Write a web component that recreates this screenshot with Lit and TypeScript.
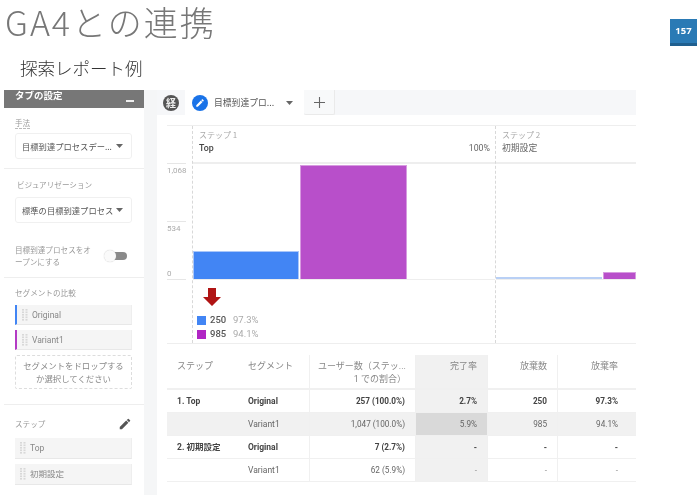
import { LitElement, html, css, svg } from "lit";
import { customElement } from "lit/decorators.js";

const grip = html`<svg class="grip" width="6" height="12" viewBox="0 0 6 12">${[0, 2.5, 5, 7.5, 10].map(
  (y) => svg`<rect x="0" y="${y}" width="2" height="1.6" fill="#d8d8d8"/><rect x="3.5" y="${y}" width="2" height="1.6" fill="#d8d8d8"/>`
)}</svg>`;
const caret = html`<svg class="caret" width="7" height="4" viewBox="0 0 7 4"><path d="M0 0h7L3.5 4z" fill="#666"/></svg>`;

@customElement("app-root")
export class AppRoot extends LitElement {
  static styles = css`
    :host { display: block; width: 700px; height: 495px; overflow: hidden; background: #fff;
      font-family: Roboto, "Noto Sans CJK JP", sans-serif; color: #555; }
    .page { width: 700px; height: 495px; overflow: hidden; display: flex; flex-direction: column; filter: blur(0.45px); }
    .head { height: 90px; flex: none; display: flex; justify-content: space-between; }
    .titles { padding: 0 0 0 5px; }
    h1 { margin: 0; height: 50px; font: 300 34px/44px "Noto Sans CJK JP", sans-serif; letter-spacing: 2px; color: #777; }
    h2 { margin: 0 0 0 15px; font: 300 17.5px/36px "Noto Sans CJK JP", sans-serif; color: #333; }
    .pageno { margin: 19px 3px 0 0; width: 27px; height: 27px; box-sizing: border-box; background: #2a7ab5; border-bottom: 3px solid #1f5f8f;
      color: #fff; font: 700 9.5px/24px "Open Sans", sans-serif; text-align: center; }
    .body { display: flex; flex: 1; min-height: 0; }
    .side { width: 140px; margin-left: 4px; flex: none; }
    .gutter { width: 13px; flex: none; background: #f5f6f7; }
    .sidehead { height: 18px; background: #777; color: #fff; font: 700 9.5px/11px "Noto Sans CJK JP", sans-serif; padding: 0 10px 0 11px; display: flex; justify-content: space-between; }
    .sidehead i { width: 8px; height: 1.5px; background: #eee; margin: 10px 0 0; }
    .sec { padding: 0 12px 0 11px; border-bottom: 1px solid #eee; box-sizing: border-box; }
    .lab { font: 7.6px/12px "Noto Sans CJK JP", sans-serif; color: #999; }
    .dashed { display: inline-block; border-bottom: 1px dashed #bbb; line-height: 10px; }
    .sel { height: 26px; box-sizing: border-box; border: 1px solid #f0f0f0; border-radius: 3px; display: flex; align-items: center; justify-content: space-between;
      padding: 0 8px 0 6px; font: 8.3px/12px "Noto Sans CJK JP", sans-serif; color: #555; white-space: nowrap; }
    .s1 { height: 61px; padding-top: 9px; }
    .s1 .sel { margin-top: 4px; }
    .s2 { height: 108px; padding-top: 10px; border-bottom: 0; }
    .s2 .lab.v { padding-left: 2px; }
    .s2 .sel { margin-top: 6px; }
    .tog { display: flex; justify-content: space-between; align-items: center; height: 27px; margin-top: 19px; padding-right: 5px; }
    .tog .lab { width: 80px; line-height: 12px; }
    .sw { width: 23px; height: 12px; position: relative; flex: none; }
    .sw::before { content: ""; position: absolute; left: 6px; top: 2px; width: 17px; height: 8.5px; border-radius: 5px; background: #8a8a8a; }
    .sw::after { content: ""; position: absolute; left: 0; top: 0; width: 12px; height: 12px; border-radius: 50%; background: #fafafa; box-shadow: 0 0 1px #bbb; }
    .s3 { height: 128px; padding-top: 9px; border-top: 1px solid #eee; }
    .s3 > .lab, .s4 > .lab { line-height: 12px; }
    .chip { height: 20px; box-sizing: border-box; background: #f5f5f5; border-bottom: 1px solid #e8e8e8; border-right: 1px solid #eee; display: flex; align-items: center; gap: 4px;
      font: 8.5px/12px Roboto, "Noto Sans CJK JP", sans-serif; color: #888; padding-left: 5px; }
    .chip.b { border-left: 2px solid #4285f4; margin-top: 6px; }
    .chip.p { border-left: 2px solid #b33ac4; margin-top: 5px; }
    .drop { margin-top: 5px; height: 34px; box-sizing: border-box; border: 1px dashed #ddd; border-radius: 2px; text-align: center;
      font: 8.4px/12.5px "Noto Sans CJK JP", sans-serif; color: #888; padding-top: 3px; }
    .s4 { border: 0; padding-top: 12px; }
    .s4 .row { display: flex; justify-content: space-between; align-items: center; height: 14px; }
    .s4 .chip { margin-top: 5px; padding-left: 5px; height: 21px; }
    .s4 .row + .chip { margin-top: 7px; }
    .main { width: 479px; flex: none; }
    .tabs { height: 25px; background: #f6f7f9; display: flex; }
    .tabs .ava { width: 28px; flex: none; display: flex; align-items: center; justify-content: center; }
    .ava span { width: 16px; height: 16px; border-radius: 50%; background: #555; color: #eee; font: 700 10px/16px "Noto Sans CJK JP", sans-serif; text-align: center; }
    .tab { width: 119px; background: #fff; display: flex; align-items: center; padding-left: 7px; box-sizing: border-box; font: 8.8px/12px "Noto Sans CJK JP", sans-serif; color: #555; }
    .pen { width: 16px; height: 16px; border-radius: 50%; background: #1a73e8; display: flex; align-items: center; justify-content: center; margin-right: 6px; }
    .tab .caret { margin-left: 12px; }
    .plus { width: 31px; box-sizing: border-box; border-right: 1px solid #eaeaea; border-bottom: 1px solid #eaeaea; border-radius: 0 0 2px 2px; display: flex; align-items: center; justify-content: center; background: #f8f9fa; }
    .chart { margin: 10px 0 0 10px; display: grid; grid-template-columns: 25px 303px 141px; border-top: 1px solid #eee; height: 219px; box-sizing: border-box; border-bottom: 1.5px solid #eee; }
    .axis { padding-top: 37px; font: 8px/10px Roboto, sans-serif; color: #aaa; }
    .seg { height: 58px; width: 19px; border-top: 1px solid #e6e6e6; box-sizing: border-box; display: flex; flex-direction: column; justify-content: space-between; padding-top: 2px; }
    .seg + .seg { border-bottom: 1px solid #e6e6e6; height: 59px; }
    .col { border-left: 1px dashed #d8d8d8; box-sizing: border-box; display: flex; flex-direction: column; }
    .colhead { height: 38px; border-bottom: 2px solid #eee; box-sizing: border-box; padding: 3px 5px 0 6px; flex: none; }
    .colhead .st { font: 8px/12px "Noto Sans CJK JP", sans-serif; color: #aaa; }
    .colhead .nm { display: flex; justify-content: space-between; font: 500 8.8px/14px Roboto, "Noto Sans CJK JP", sans-serif; color: #444; }
    .colhead .pc { font-weight: 400; color: #666; }
    .plot { height: 116px; flex: none; display: flex; align-items: flex-end; gap: 1px; border-bottom: 1px solid #eee; box-sizing: border-box; }
    .bar { box-sizing: border-box; }
    .blue { background: #4285f4; border: 1px solid #a9c6f9; border-bottom: 0; }
    .pur { background: #b84fca; border: 1px solid #d79be0; border-bottom: 0; }
    .thin { background: #b9d0f5; height: 2px; width: 106px; }
    .lower { padding: 8px 0 0 4px; }
    .legend { display: grid; grid-template-columns: 9px 19px auto; column-gap: 4px; align-items: center; justify-content: start; margin-top: 7px; font: 500 9.5px/14px Roboto, sans-serif; color: #555; }
    .legend i { width: 9px; height: 9px; display: block; }
    .legend span:nth-child(3n) { font-weight: 400; color: #aaa; }
    .arrow { display: block; margin-left: 6px; }
    .tbl { margin: 11px 0 0 10px; display: grid; grid-template-columns: 71px 71px 106px 72px 70px 79px; font: 8.5px/12px Roboto, "Noto Sans CJK JP", sans-serif; color: #666; }
    .tbl > div { box-sizing: border-box; height: 23px; padding: 0 10px; display: flex; align-items: center; border-bottom: 1px solid #f0f0f0; white-space: nowrap; }
    .tbl .h { height: 35px; border-bottom: 2px solid #f0f0f0; align-items: flex-start; padding-top: 5px; color: #888; font-size: 9px; }
    .tbl .r { justify-content: flex-end; text-align: right; border-left: 1px solid #f0f0f0; font-size: 8.2px; }
    .tbl .h.r { font-size: 9px; }
    .tbl .r.c4 { padding-right: 10px; } .tbl .r.c6 { padding-right: 18px; }
    .tbl .multi { line-height: 13px; padding-right: 9px; }
    .tbl .b { font-weight: 700; color: #444; }
    .tbl .g { background: #f1f1f1; }
    .tbl .gg { background: #d9d9d9; }
    .tbl .dim { color: #999; }
  `;

  row(step: string, seg: string, a: string, b: string, c: string, d: string, strong: boolean, grey: boolean, hi = false) {
    const w = strong ? "b" : "";
    const g = grey ? "g" : "";
    const dim = b === "-" && !strong ? "dim" : "";
    return html`
      <div class="${w} ${g}">${step}</div>
      <div class="${w} ${g}">${seg}</div>
      <div class="r ${w} ${g}">${a}</div>
      <div class="r c4 ${w} ${dim} ${hi ? "gg" : "g"}">${b}</div>
      <div class="r ${w} ${g} ${dim}">${c}</div>
      <div class="r c6 ${w} ${g} ${dim}">${d}</div>`;
  }

  render() {
    return html`<div class="page">
      <div class="head">
        <div class="titles"><h1>GA4との連携</h1><h2>探索レポート例</h2></div>
        <div class="pageno">157</div>
      </div>
      <div class="body">
        <aside class="side">
          <div class="sidehead"><span>タブの設定</span><i></i></div>
          <div class="sec s1">
            <div class="lab"><span class="dashed">手法</span></div>
            <div class="sel"><span>目標到達プロセスデー...</span>${caret}</div>
          </div>
          <div class="sec s2">
            <div class="lab v">ビジュアリゼーション</div>
            <div class="sel"><span>標準の目標到達プロセス</span>${caret}</div>
            <div class="tog"><div class="lab">目標到達プロセスをオープンにする</div><div class="sw"></div></div>
          </div>
          <div class="sec s3">
            <div class="lab">セグメントの比較</div>
            <div class="chip b">${grip}Original</div>
            <div class="chip p">${grip}Variant1</div>
            <div class="drop">セグメントをドロップする<br />か選択してください</div>
          </div>
          <div class="sec s4">
            <div class="row"><span class="lab">ステップ</span>
              <svg width="14" height="14" viewBox="0 0 24 24"><path fill="#555" d="M3 17.25V21h3.75L17.81 9.94l-3.75-3.75L3 17.25zM20.71 7.04a1 1 0 0 0 0-1.41l-2.34-2.34a1 1 0 0 0-1.41 0l-1.83 1.83 3.75 3.75 1.83-1.83z"/></svg>
            </div>
            <div class="chip">${grip}Top</div>
            <div class="chip">${grip}初期設定</div>
          </div>
        </aside>
        <div class="gutter"></div>
        <section class="main">
          <div class="tabs">
            <div class="ava"><span>経</span></div>
            <div class="tab">
              <span class="pen"><svg width="10" height="10" viewBox="0 0 24 24"><path fill="#fff" d="M3 17.25V21h3.75L17.81 9.94l-3.75-3.75L3 17.25zM20.71 7.04a1 1 0 0 0 0-1.41l-2.34-2.34a1 1 0 0 0-1.41 0l-1.83 1.83 3.75 3.75 1.83-1.83z"/></svg></span>
              <span>目標到達プロ...</span>${caret}
            </div>
            <div class="plus"><svg width="11" height="11" viewBox="0 0 11 11"><path d="M5.5 0v11M0 5.5h11" stroke="#666" stroke-width="1.1"/></svg></div>
          </div>
          <div class="chart">
            <div class="axis">
              <div class="seg"><span>1,068</span></div>
              <div class="seg"><span>534</span><span>0</span></div>
            </div>
            <div class="col">
              <div class="colhead"><div class="st">ステップ 1</div><div class="nm"><span>Top</span><span class="pc">100%</span></div></div>
              <div class="plot">
                <div class="bar blue" style="width:106px;height:28px"></div>
                <div class="bar pur" style="width:107px;height:114px"></div>
              </div>
              <div class="lower">
                <svg class="arrow" width="18" height="18" viewBox="0 0 18 18"><path d="M5 0h8v9h5l-9 9-9-9h5z" fill="#b01414"/></svg>
                <div class="legend">
                  <i style="background:#4285f4"></i><span>250</span><span>97.3%</span>
                  <i style="background:#b026c4"></i><span>985</span><span>94.1%</span>
                </div>
              </div>
            </div>
            <div class="col">
              <div class="colhead"><div class="st">ステップ 2</div><div class="nm"><span class="pc">初期設定</span></div></div>
              <div class="plot">
                <div class="bar thin"></div>
                <div class="bar pur" style="width:33px;height:7px"></div>
              </div>
            </div>
          </div>
          <div class="tbl">
            <div class="h">ステップ</div>
            <div class="h">セグメント</div>
            <div class="h r multi">ユーザー数（ステッ...<br />1 での割合）</div>
            <div class="h r c4 g">完了率</div>
            <div class="h r">放棄数</div>
            <div class="h r c6">放棄率</div>
            ${this.row("1. Top", "Original", "257 (100.0%)", "2.7%", "250", "97.3%", true, false)}
            ${this.row("", "Variant1", "1,047 (100.0%)", "5.9%", "985", "94.1%", false, true, true)}
            ${this.row("2. 初期設定", "Original", "7 (2.7%)", "-", "-", "-", true, false)}
            ${this.row("", "Variant1", "62 (5.9%)", "-", "-", "-", false, false)}
          </div>
        </section>
      </div>
    </div>`;
  }
}
